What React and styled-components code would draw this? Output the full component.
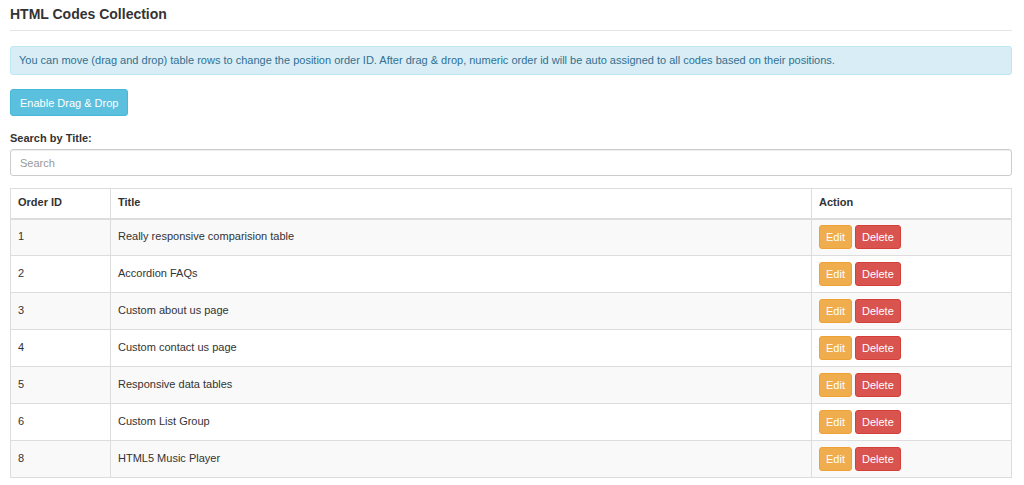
import React from 'react';
import styled, { createGlobalStyle } from 'styled-components';

const GlobalStyle = createGlobalStyle`
  html, body {
    margin: 0;
    padding: 0;
    overflow: hidden;
    background: #fff;
  }
  body {
    font-family: "Liberation Sans", Arial, Helvetica, sans-serif;
    font-size: 11px;
    line-height: 1.42857;
    color: #333;
  }
  * { box-sizing: border-box; }
`;

const Page = styled.div`
  padding: 0 12px 0 10px;
`;

const Heading = styled.h3`
  margin: 0;
  padding: 6px 0 8px;
  font-size: 14px;
  font-weight: bold;
  line-height: 16px;
  color: #333;
  border-bottom: 1px solid #e5e5e5;
`;

const Alert = styled.div`
  margin-top: 15px;
  padding: 5px 8px;
  font-size: 11px;
  line-height: 17px;
  color: #31708f;
  background: #d9edf7;
  border: 1px solid #bce8f1;
  border-radius: 3px;
`;

const Button = styled.button`
  display: inline-block;
  font-family: inherit;
  border: 1px solid ${p => p.border};
  background: ${p => p.bg};
  color: #fff;
  border-radius: 3px;
  cursor: pointer;
  font-size: 11px;
  line-height: 16px;
  padding: ${p => (p.small ? '3px 6px' : '4px 9px')};
`;

const Toolbar = styled.div`
  margin-top: 14px;
  display: flex;
  & > button { height: 27px; }
`;

const Label = styled.label`
  display: block;
  margin-top: 14px;
  font-size: 11px;
  font-weight: bold;
  line-height: 16px;
`;

const SearchInput = styled.input`
  display: block;
  width: 100%;
  height: 27px;
  margin-top: 3px;
  padding: 4px 9px;
  font-family: inherit;
  font-size: 11px;
  color: #555;
  border: 1px solid #ccc;
  border-radius: 3px;
  box-shadow: inset 0 1px 1px rgba(0, 0, 0, 0.075);
  outline: none;
  &::placeholder { color: #999; }
`;

const Table = styled.table`
  margin-top: 12px;
  width: 100%;
  border-collapse: collapse;
  border: 1px solid #ddd;
  table-layout: fixed;
`;

const Th = styled.th`
  text-align: left;
  font-size: 11px;
  font-weight: bold;
  height: 30px;
  padding: 0 7px;
  border: 1px solid #ddd;
  border-bottom: 2px solid #ddd;
  width: ${p => p.w || 'auto'};
`;

const Row = styled.tr`
  background: ${p => (p.odd ? '#f9f9f9' : '#fff')};
`;

const Td = styled.td`
  height: 37px;
  padding: 0 7px;
  font-size: 11px;
  border: 1px solid #ddd;
  vertical-align: middle;
`;

const Actions = styled.div`
  display: flex;
  gap: 3px;
`;

const rows = [
  [1, 'Really responsive comparision table'],
  [2, 'Accordion FAQs'],
  [3, 'Custom about us page'],
  [4, 'Custom contact us page'],
  [5, 'Responsive data tables'],
  [6, 'Custom List Group'],
  [8, 'HTML5 Music Player'],
];

export default function App() {
  return (
    <Page>
      <GlobalStyle />
      <Heading>HTML Codes Collection</Heading>
      <Alert>
        You can move (drag and drop) table rows to change the position order ID. After drag &amp; drop, numeric order id will be auto assigned to all codes based on their positions.
      </Alert>
      <Toolbar>
        <Button bg="#5bc0de" border="#46b8da">Enable Drag &amp; Drop</Button>
      </Toolbar>
      <Label htmlFor="search">Search by Title:</Label>
      <SearchInput id="search" placeholder="Search" />
      <Table>
        <thead>
          <tr>
            <Th w="100px">Order ID</Th>
            <Th>Title</Th>
            <Th w="200px">Action</Th>
          </tr>
        </thead>
        <tbody>
          {rows.map(([id, title], i) => (
            <Row key={id} odd={i % 2 === 0}>
              <Td>{id}</Td>
              <Td>{title}</Td>
              <Td>
                <Actions>
                  <Button small bg="#f0ad4e" border="#eea236">Edit</Button>
                  <Button small bg="#d9534f" border="#d43f3a">Delete</Button>
                </Actions>
              </Td>
            </Row>
          ))}
        </tbody>
      </Table>
    </Page>
  );
}
